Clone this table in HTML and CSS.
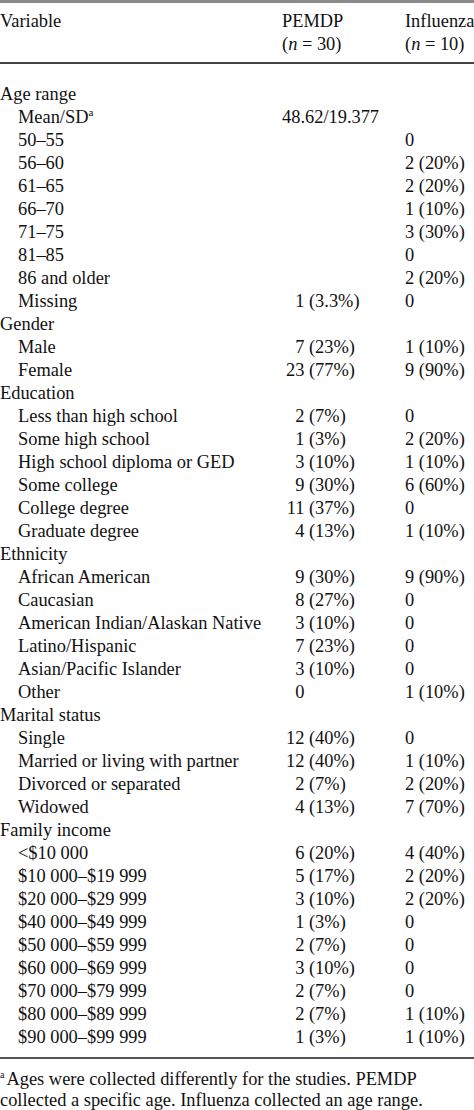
FILE: index.html
```html
<!DOCTYPE html>
<html>
<head>
<meta charset="utf-8">
<link rel="stylesheet" href="styles.css">
</head>
<body>
<div class="page">
  <div class="rule-top"></div>
  <div class="head">
    <div class="row">
      <div class="c1">Variable</div>
      <div class="c2">PEMDP</div>
      <div class="c3">Influenza</div>
    </div>
    <div class="row">
      <div class="c1"></div>
      <div class="c2">(<i>n</i> = 30)</div>
      <div class="c3">(<i>n</i> = 10)</div>
    </div>
  </div>
  <div class="rule-mid"></div>
  <div class="body">
    <div class="row"><div class="c1">Age range</div><div class="c2"></div><div class="c3"></div></div>
    <div class="row"><div class="c1 sub">Mean/SD<sup>a</sup></div><div class="c2">48.62/19.377</div><div class="c3"></div></div>
    <div class="row"><div class="c1 sub">50–55</div><div class="c2"></div><div class="c3">0</div></div>
    <div class="row"><div class="c1 sub">56–60</div><div class="c2"></div><div class="c3">2 (20%)</div></div>
    <div class="row"><div class="c1 sub">61–65</div><div class="c2"></div><div class="c3">2 (20%)</div></div>
    <div class="row"><div class="c1 sub">66–70</div><div class="c2"></div><div class="c3">1 (10%)</div></div>
    <div class="row"><div class="c1 sub">71–75</div><div class="c2"></div><div class="c3">3 (30%)</div></div>
    <div class="row"><div class="c1 sub">81–85</div><div class="c2"></div><div class="c3">0</div></div>
    <div class="row"><div class="c1 sub">86 and older</div><div class="c2"></div><div class="c3">2 (20%)</div></div>
    <div class="row"><div class="c1 sub">Missing</div><div class="c2"><span class="n">1</span> (3.3%)</div><div class="c3">0</div></div>
    <div class="row"><div class="c1">Gender</div><div class="c2"></div><div class="c3"></div></div>
    <div class="row"><div class="c1 sub">Male</div><div class="c2"><span class="n">7</span> (23%)</div><div class="c3">1 (10%)</div></div>
    <div class="row"><div class="c1 sub">Female</div><div class="c2"><span class="n">23</span> (77%)</div><div class="c3">9 (90%)</div></div>
    <div class="row"><div class="c1">Education</div><div class="c2"></div><div class="c3"></div></div>
    <div class="row"><div class="c1 sub">Less than high school</div><div class="c2"><span class="n">2</span> (7%)</div><div class="c3">0</div></div>
    <div class="row"><div class="c1 sub">Some high school</div><div class="c2"><span class="n">1</span> (3%)</div><div class="c3">2 (20%)</div></div>
    <div class="row"><div class="c1 sub">High school diploma or GED</div><div class="c2"><span class="n">3</span> (10%)</div><div class="c3">1 (10%)</div></div>
    <div class="row"><div class="c1 sub">Some college</div><div class="c2"><span class="n">9</span> (30%)</div><div class="c3">6 (60%)</div></div>
    <div class="row"><div class="c1 sub">College degree</div><div class="c2"><span class="n">11</span> (37%)</div><div class="c3">0</div></div>
    <div class="row"><div class="c1 sub">Graduate degree</div><div class="c2"><span class="n">4</span> (13%)</div><div class="c3">1 (10%)</div></div>
    <div class="row"><div class="c1">Ethnicity</div><div class="c2"></div><div class="c3"></div></div>
    <div class="row"><div class="c1 sub">African American</div><div class="c2"><span class="n">9</span> (30%)</div><div class="c3">9 (90%)</div></div>
    <div class="row"><div class="c1 sub">Caucasian</div><div class="c2"><span class="n">8</span> (27%)</div><div class="c3">0</div></div>
    <div class="row"><div class="c1 sub">American Indian/Alaskan Native</div><div class="c2"><span class="n">3</span> (10%)</div><div class="c3">0</div></div>
    <div class="row"><div class="c1 sub">Latino/Hispanic</div><div class="c2"><span class="n">7</span> (23%)</div><div class="c3">0</div></div>
    <div class="row"><div class="c1 sub">Asian/Pacific Islander</div><div class="c2"><span class="n">3</span> (10%)</div><div class="c3">0</div></div>
    <div class="row"><div class="c1 sub">Other</div><div class="c2"><span class="n">0</span></div><div class="c3">1 (10%)</div></div>
    <div class="row"><div class="c1">Marital status</div><div class="c2"></div><div class="c3"></div></div>
    <div class="row"><div class="c1 sub">Single</div><div class="c2"><span class="n">12</span> (40%)</div><div class="c3">0</div></div>
    <div class="row"><div class="c1 sub">Married or living with partner</div><div class="c2"><span class="n">12</span> (40%)</div><div class="c3">1 (10%)</div></div>
    <div class="row"><div class="c1 sub">Divorced or separated</div><div class="c2"><span class="n">2</span> (7%)</div><div class="c3">2 (20%)</div></div>
    <div class="row"><div class="c1 sub">Widowed</div><div class="c2"><span class="n">4</span> (13%)</div><div class="c3">7 (70%)</div></div>
    <div class="row"><div class="c1">Family income</div><div class="c2"></div><div class="c3"></div></div>
    <div class="row"><div class="c1 sub">&lt;$10 000</div><div class="c2"><span class="n">6</span> (20%)</div><div class="c3">4 (40%)</div></div>
    <div class="row"><div class="c1 sub">$10 000–$19 999</div><div class="c2"><span class="n">5</span> (17%)</div><div class="c3">2 (20%)</div></div>
    <div class="row"><div class="c1 sub">$20 000–$29 999</div><div class="c2"><span class="n">3</span> (10%)</div><div class="c3">2 (20%)</div></div>
    <div class="row"><div class="c1 sub">$40 000–$49 999</div><div class="c2"><span class="n">1</span> (3%)</div><div class="c3">0</div></div>
    <div class="row"><div class="c1 sub">$50 000–$59 999</div><div class="c2"><span class="n">2</span> (7%)</div><div class="c3">0</div></div>
    <div class="row"><div class="c1 sub">$60 000–$69 999</div><div class="c2"><span class="n">3</span> (10%)</div><div class="c3">0</div></div>
    <div class="row"><div class="c1 sub">$70 000–$79 999</div><div class="c2"><span class="n">2</span> (7%)</div><div class="c3">0</div></div>
    <div class="row"><div class="c1 sub">$80 000–$89 999</div><div class="c2"><span class="n">2</span> (7%)</div><div class="c3">1 (10%)</div></div>
    <div class="row"><div class="c1 sub">$90 000–$99 999</div><div class="c2"><span class="n">1</span> (3%)</div><div class="c3">1 (10%)</div></div>
  </div>
  <div class="rule-bot"></div>
  <div class="foot">
    <p class="fl"><sup>a</sup><span>Ages were collected differently for the studies. PEMDP</span></p>
    <p class="fl"><span>collected a specific age. Influenza collected an age range.</span></p>
  </div>
</div>
</body>
</html>
```
FILE: styles.css
```css
html, body {
  margin: 0;
  padding: 0;
  background: #ffffff;
}
.page {
  width: 474px;
  font-family: "Liberation Serif", "Times New Roman", serif;
  font-size: 18.4px;
  color: #111111;
  overflow: hidden;
}
.rule-top {
  height: 2.5px;
  background: #8a8a8a;
}
.head {
  padding-top: 7px;
  padding-bottom: 6.5px;
}
.rule-mid {
  height: 2px;
  background: #444444;
}
.body {
  padding-top: 19px;
  padding-bottom: 8px;
}
.row {
  display: grid;
  grid-template-columns: 282px 122px 1fr;
  height: 23px;
  line-height: 23px;
  white-space: nowrap;
}
.c1.sub {
  padding-left: 18px;
}
.c3 {
  padding-left: 1px;
}
.n {
  display: inline-block;
  min-width: 22.4px;
  text-align: right;
}
sup {
  font-size: 11px;
  line-height: 0;
  vertical-align: 7px;
}
.rule-bot {
  height: 1.5px;
  background: #555555;
}
.foot {
  padding-top: 10px;
}
.fl {
  margin: 0;
  line-height: 21.5px;
  white-space: nowrap;
}
.fl sup {
  display: inline-block;
  font-size: 10px;
  line-height: 10px;
  vertical-align: 7px;
  margin-right: 2px;
}
```
